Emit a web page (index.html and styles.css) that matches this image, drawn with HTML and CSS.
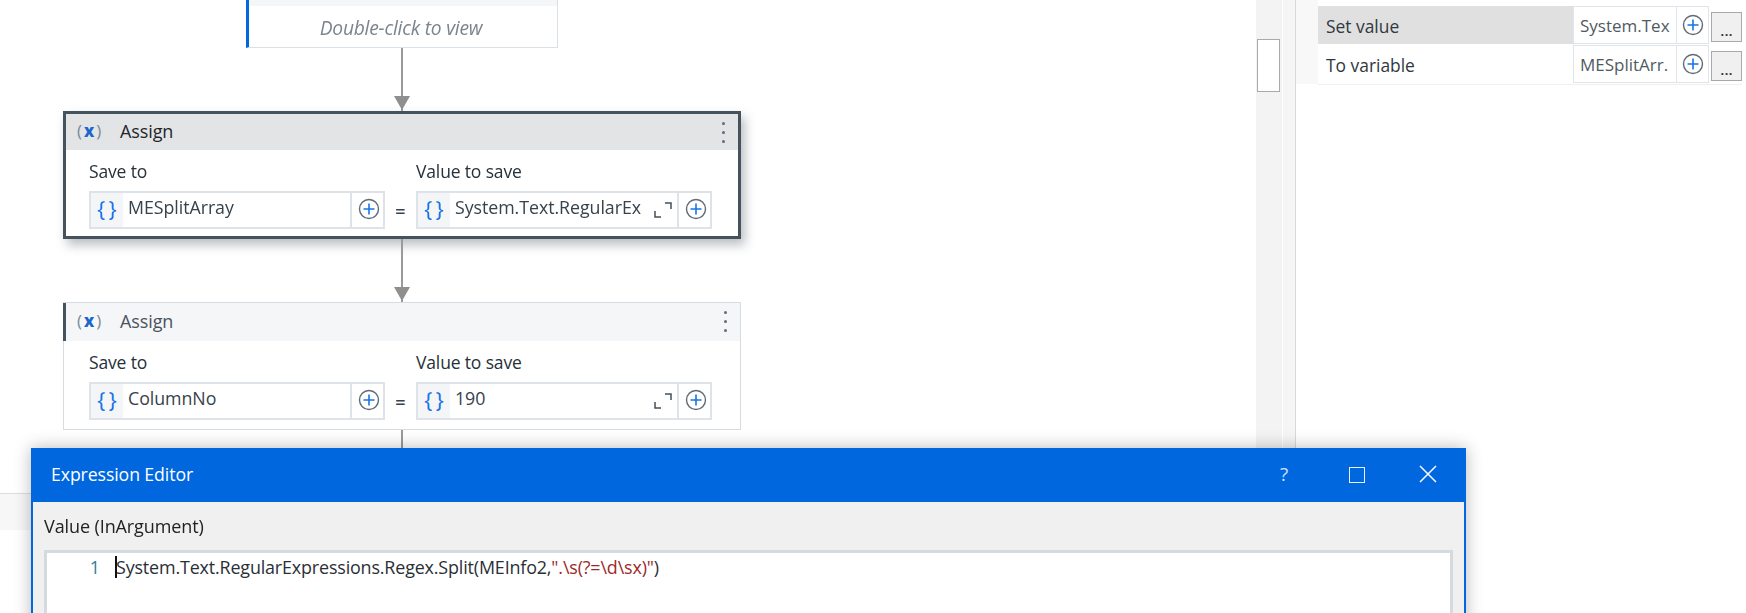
FILE: index.html
```html
<!DOCTYPE html>
<html lang="en">
<head>
<meta charset="utf-8">
<title>Expression Editor</title>
<link rel="stylesheet" href="styles.css">
</head>
<body>
<svg class="defs" width="0" height="0">
  <defs>
    <symbol id="plus" viewBox="0 0 22 22">
      <circle cx="11" cy="11" r="9.5" fill="none" stroke="#5f6b76" stroke-width="1.4"/>
      <path d="M11 5.5v11M5.5 11h11" fill="none" stroke="#1a73e8" stroke-width="1.6"/>
    </symbol>
    <symbol id="expand" viewBox="0 0 18 16">
      <path d="M1 9v6h6M11 1h6v6" fill="none" stroke="#44505a" stroke-width="1.5"/>
    </symbol>
  </defs>
</svg>
<div class="app">
  <main class="canvas">
    <div class="flow">
      <section class="seq">
        <div class="seq-head"></div>
        <div class="seq-body">Double-click to view</div>
      </section>
      <div class="link arrow link-a"></div>
      <section class="card card-selected">
        <header class="card-head">
          <span class="vars"><span class="paren">(</span><b>x</b><span class="paren">)</span></span>
          <span class="card-title">Assign</span>
          <span class="kebab"><i></i><i></i><i></i></span>
        </header>
        <div class="card-body">
          <div class="field field-left">
            <label>Save to</label>
            <div class="box">
              <span class="curly">{&#8201;}</span>
              <span class="val">MESplitArray</span>
              <span class="add"><svg><use href="#plus"/></svg></span>
            </div>
          </div>
          <span class="eq">=</span>
          <div class="field">
            <label>Value to save</label>
            <div class="box">
              <span class="curly">{&#8201;}</span>
              <span class="val">System.Text.RegularEx</span>
              <svg class="exp"><use href="#expand"/></svg>
              <span class="add"><svg><use href="#plus"/></svg></span>
            </div>
          </div>
        </div>
      </section>
      <div class="link arrow link-b"></div>
      <section class="card card-plain">
        <header class="card-head">
          <span class="vars"><span class="paren">(</span><b>x</b><span class="paren">)</span></span>
          <span class="card-title">Assign</span>
          <span class="kebab"><i></i><i></i><i></i></span>
        </header>
        <div class="card-body">
          <div class="field field-left">
            <label>Save to</label>
            <div class="box">
              <span class="curly">{&#8201;}</span>
              <span class="val">ColumnNo</span>
              <span class="add"><svg><use href="#plus"/></svg></span>
            </div>
          </div>
          <span class="eq">=</span>
          <div class="field">
            <label>Value to save</label>
            <div class="box">
              <span class="curly">{&#8201;}</span>
              <span class="val">190</span>
              <svg class="exp"><use href="#expand"/></svg>
              <span class="add"><svg><use href="#plus"/></svg></span>
            </div>
          </div>
        </div>
      </section>
      <div class="link link-c"></div>
    </div>
    <div class="under-strip"></div>
  </main>

  <div class="scrollbar"><div class="thumb"></div></div>
  <div class="gutter"></div>

  <aside class="props">
    <div class="props-side"></div>
    <div class="props-rows">
      <div class="row">
        <div class="row-name row-name-on">Set value</div>
        <div class="row-cell"><span class="cell-val">System.Tex</span><span class="cell-add"><svg><use href="#plus"/></svg></span></div>
        <button class="more" type="button">...</button>
      </div>
      <div class="row">
        <div class="row-name">To variable</div>
        <div class="row-cell"><span class="cell-val">MESplitArr.</span><span class="cell-add"><svg><use href="#plus"/></svg></span></div>
        <button class="more" type="button">...</button>
      </div>
    </div>
  </aside>

  <section class="dialog">
    <header class="dlg-bar">
      <h1>Expression Editor</h1>
      <span class="dlg-help">?</span>
      <span class="dlg-max"></span>
      <svg class="dlg-close" viewBox="0 0 18 18"><path d="M1 1l16 16M17 1L1 17" fill="none" stroke="#fff" stroke-width="1.5"/></svg>
    </header>
    <div class="dlg-body">
      <div class="dlg-label">Value (InArgument)</div>
      <div class="editor">
        <span class="ln">1</span>
        <span class="code"><span class="caret"></span>System.Text.RegularExpressions.Regex.Split(MEInfo2,<span class="str">".\s(?=\d\sx)"</span>)</span>
      </div>
    </div>
  </section>
</div>
</body>
</html>
```
FILE: styles.css
```css
* { box-sizing: border-box; }
html, body { margin: 0; height: 100%; background: #fff; overflow: hidden; }
body { font-family: "Open Sans", "Noto Sans", sans-serif; color: #273139; }
.defs { position: absolute; }

.app {
  position: relative;
  width: 1746px;
  height: 613px;
  overflow: hidden;
  display: flex;
  filter: blur(0.6px);
}

/* Canvas */
.canvas { position: relative; width: 1256px; flex: none; }
.flow {
  position: relative;
  z-index: 1;
  width: 804px;
  display: flex;
  flex-direction: column;
  align-items: center;
}
.seq {
  width: 312px;
  height: 48px;
  border: 1px solid #d9e0e6;
  border-top: 0;
  border-left: 3px solid #0067df;
  background: #fff;
}
.seq-head { height: 6px; background: #f5f6f7; }
.seq-body {
  height: 41px;
  padding: 2px 4px 0 0;
  display: flex;
  align-items: center;
  justify-content: center;
  font-size: 19.2px;
  font-style: italic;
  color: #7b848c;
  letter-spacing: -0.2px;
}
.link { width: 2px; background: #9a9a9a; position: relative; flex: none; }
.link-a { height: 63px; }
.link-b { height: 63px; }
.link-c { height: 22px; }
.arrow::after {
  content: "";
  position: absolute;
  left: -7px;
  bottom: 1px;
  border-left: 8px solid transparent;
  border-right: 8px solid transparent;
  border-top: 14px solid #8f8f8f;
}

.card { width: 678px; background: #fff; flex: none; }
.card-selected {
  height: 128px;
  border: 3px solid #45535f;
  box-shadow: 4px 6px 10px rgba(60, 70, 80, .35);
}
.card-plain {
  height: 128px;
  border: 1px solid #d5dce2;
}
.card-head {
  height: 36px;
  display: flex;
  align-items: center;
  padding: 0 0 3px 11px;
  background: #e3e4e6;
  position: relative;
}
.card-plain .card-head {
  height: 38px;
  margin-left: -1px;
  border-left: 3px solid #45535f;
  background: #f5f6f7;
  padding: 0 0 2px 11px;
}
.vars { width: 43px; font-size: 17px; line-height: 22px; color: #7c8a96; display: flex; gap: 2px; }
.vars b { color: #1a66cc; font-weight: 800; font-family: "Noto Sans", sans-serif; }
.card-title { font-size: 18px; letter-spacing: -0.1px; color: #1f262c; }
.card-plain .card-title { color: #4a545d; }
.kebab {
  position: absolute;
  right: 13px;
  top: 8px;
  display: flex;
  flex-direction: column;
  gap: 6px;
}
.kebab i { width: 3px; height: 3px; border-radius: 50%; background: #5f6b76; display: block; }

.card-body {
  display: flex;
  align-items: flex-end;
  height: 86px;
  padding: 0 0 7px 23px;
}
.card-plain .card-body { height: 88px; padding: 0 0 9px 25px; }
.field { width: 296px; }
.field label { display: block; font-size: 17.5px; line-height: 22px; margin-bottom: 9px; color: #273139; letter-spacing: -0.15px; }
.box {
  height: 38px;
  display: flex;
  align-items: center;
  border: 2px solid #dde3e8;
  background: #fff;
}
.curly {
  width: 32px;
  height: 100%;
  flex: none;
  padding-bottom: 3px;
  background: #f4f5f6;
  color: #1a73e8;
  font-size: 21px;
  display: flex;
  align-items: center;
  justify-content: center;
  font-family: "Noto Sans", sans-serif;
}
.val { flex: 1; padding: 0 0 6px 5px; font-size: 17.8px; letter-spacing: -0.05px; color: #37424c; white-space: nowrap; overflow: hidden; }
.exp { width: 18px; height: 16px; flex: none; margin: 0 5px 0 0; }
.add {
  width: 33px;
  height: 100%;
  flex: none;
  padding: 0 0 2px 2px;
  border-left: 2px solid #dde3e8;
  display: flex;
  align-items: center;
  justify-content: center;
}
.add svg { width: 22px; height: 22px; }
.eq { width: 31px; text-align: center; font-size: 18px; font-weight: 600; padding-bottom: 6px; color: #37424c; }

.under-strip {
  position: absolute;
  left: 0; right: 0;
  top: 493px;
  height: 37px;
  background: #f7f7f7;
  border-top: 1px solid #dedede;
}

/* Scrollbar and gutter */
.scrollbar {
  width: 26px;
  flex: none;
  background: #f3f3f3;
  padding: 39px 1px 0;
}
.thumb { height: 53px; width: 23px; background: #fff; border: 1px solid #a9a9a9; }
.gutter { width: 13px; flex: none; background: #f5f5f5; border-right: 1px solid #d9d9d9; margin-left: 1px; }

/* Property panel */
.props { flex: 1; display: flex; align-items: flex-start; background: #fff; }
.props-side { width: 22px; height: 84px; background: #f8f8f8; flex: none; }
.props-rows { flex: none; width: 424px; padding-top: 6px; border-bottom: 1px solid #f0f0f0; }
.row { display: flex; align-items: center; height: 39px; padding-bottom: 1px; }
.row-name {
  width: 255px;
  height: 38px;
  padding: 2px 0 0 8px;
  display: flex;
  align-items: center;
  font-size: 17.4px;
  color: #30383f;
  flex: none;
}
.row-name-on { background: #e0e0e0; }
.row-cell {
  width: 136px;
  height: 38px;
  display: flex;
  align-items: center;
  border: 1px solid #dfe5ea;
  flex: none;
}
.cell-val { width: 102px; padding-left: 6px; font-size: 17px; color: #505a63; white-space: nowrap; flex: none; }
.cell-add { flex: 1; height: 100%; padding-left: 1px; display: flex; align-items: center; justify-content: center; border-left: 1px solid #dfe5ea; }
.cell-add svg { width: 22px; height: 22px; }
.more {
  width: 31px;
  height: 30px;
  margin: 4px 0 0 2px;
  padding: 6px 0 0;
  background: #f0f0f0;
  border: 1px solid #a9a9a9;
  font-family: inherit;
  font-size: 15px;
  font-weight: 600;
  color: #333;
  flex: none;
}

/* Dialog */
.dialog {
  position: absolute;
  left: 31px;
  top: 448px;
  width: 1435px;
  height: 200px;
  z-index: 3;
  background: #f0f0f0;
  border: 2px solid #0067df;
  border-top: 0;
  box-shadow: 0 0 16px rgba(0, 0, 0, .28);
}
.dlg-bar {
  height: 54px;
  background: #0067df;
  display: flex;
  align-items: center;
  padding: 0 29px 2px 20px;
  color: #fff;
  margin: 0 -2px;
}
.dlg-bar h1 { flex: 1; margin: 0; font-size: 17.7px; font-weight: 400; letter-spacing: -0.1px; }
.dlg-help { font-size: 19px; width: 20px; text-align: center; color: #cfe2fa; }
.dlg-max { width: 16px; height: 16px; border: 1.5px solid #e8f1fd; margin: 0 0 -1px 55px; }
.dlg-close { width: 18px; height: 18px; margin-left: 54px; }
.dlg-body { padding: 13px 11px 0 11px; }
.dlg-label { font-size: 18px; line-height: 22px; color: #222; margin-bottom: 13px; letter-spacing: -0.1px; }
.editor {
  height: 120px;
  background: #fff;
  border: 3px solid #d3dae0;
  display: flex;
  font-size: 17.9px;
  line-height: 22px;
  padding-top: 3px;
  position: relative;
}
.ln { width: 69px; padding-right: 16px; text-align: right; color: #2f7f96; flex: none; }
.code { position: relative; white-space: pre; color: #2a2f36; letter-spacing: -0.15px; }
.caret { position: absolute; left: -1px; top: 0; width: 2px; height: 22px; background: #111; }
.str { color: #9c2a2a; }
```
